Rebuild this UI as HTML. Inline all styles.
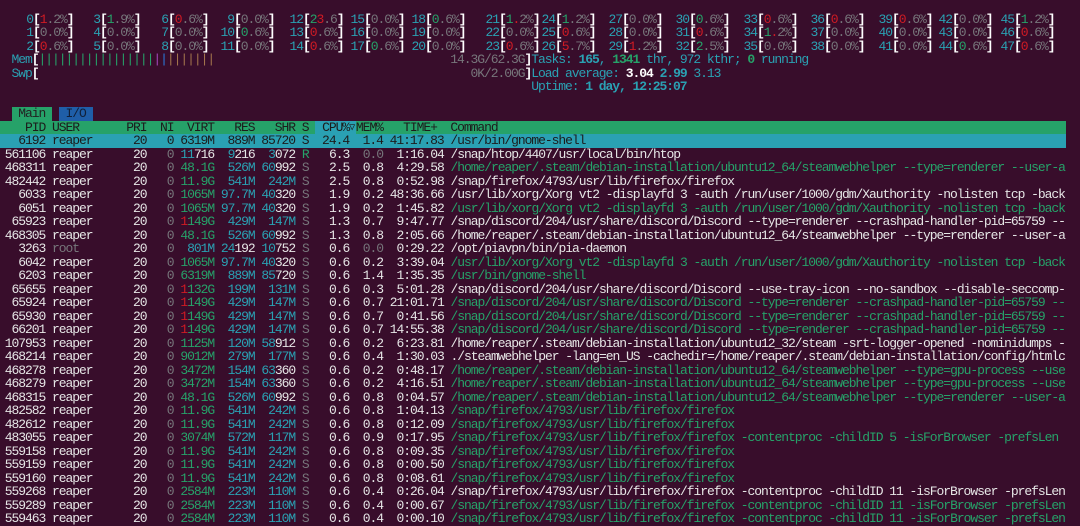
<!DOCTYPE html>
<html><head><meta charset="utf-8"><style>
html,body{margin:0;padding:0;background:#380d2b;width:1080px;height:526px;overflow:hidden}
body{font-family:"Liberation Mono","DejaVu Sans Mono",monospace;font-size:13px;letter-spacing:-1.05px;color:#e6e6e6;position:relative}
.blk{position:absolute;left:-2px;width:1068px}
.l{height:13.5px;line-height:13.5px;white-space:pre;position:relative;overflow:hidden;width:1068px}
c{color:#2aa1b3} g{color:#26a269} r{color:#d01b24} d{color:#77767b} w{color:#fff;font-weight:bold}
cb{color:#2aa1b3;font-weight:bold} gb{color:#26a269;font-weight:bold}
mg{color:#a347ba} bl{color:#2a7bde} og{color:#a2734c}
.m{position:absolute;color:#77767b;white-space:pre;line-height:13.5px}
.m i{position:absolute;right:100%;color:#2aa1b3;font-style:normal}
.m em{font-style:normal;color:#fff;font-weight:bold}
.rp{position:absolute;left:533.25px;top:0}
.rv{position:absolute;right:534.75px;top:0}
.tm{background:#26a269;color:#222}
.ti{background:#1f5ea8;color:#10203a}
.hd{background:#26a269;color:#1c1c1c}
.hc{background:#2aa1b3}
.sel{background:#2aa1b3;color:#1c1c1c}
.tri{display:inline-block;width:6.75px;overflow:hidden;vertical-align:top;letter-spacing:0;font-family:"DejaVu Sans Mono",monospace;font-size:10px}
</style></head><body>

<span class=m style="left:33px;top:12.75px"><i>0</i><em>[</em><r>1</r>.2%<em>]</em></span>
<span class=m style="left:100px;top:12.75px"><i>3</i><em>[</em><g>1</g>.9%<em>]</em></span>
<span class=m style="left:168px;top:12.75px"><i>6</i><em>[</em><r>0</r>.6%<em>]</em></span>
<span class=m style="left:234px;top:12.75px"><i>9</i><em>[</em>0.0%<em>]</em></span>
<span class=m style="left:303px;top:12.75px"><i>12</i><em>[</em><g>2</g><r>3</r>.6<em>]</em></span>
<span class=m style="left:364px;top:12.75px"><i>15</i><em>[</em>0.0%<em>]</em></span>
<span class=m style="left:425px;top:12.75px"><i>18</i><em>[</em><g>0</g>.6%<em>]</em></span>
<span class=m style="left:499px;top:12.75px"><i>21</i><em>[</em><g>1</g><r>.</r>2%<em>]</em></span>
<span class=m style="left:555px;top:12.75px"><i>24</i><em>[</em><g>1</g>.2%<em>]</em></span>
<span class=m style="left:622px;top:12.75px"><i>27</i><em>[</em>0.0%<em>]</em></span>
<span class=m style="left:689px;top:12.75px"><i>30</i><em>[</em><g>0</g>.6%<em>]</em></span>
<span class=m style="left:757px;top:12.75px"><i>33</i><em>[</em><r>0</r>.6%<em>]</em></span>
<span class=m style="left:824px;top:12.75px"><i>36</i><em>[</em><r>0</r>.6%<em>]</em></span>
<span class=m style="left:892px;top:12.75px"><i>39</i><em>[</em><r>0</r>.6%<em>]</em></span>
<span class=m style="left:952px;top:12.75px"><i>42</i><em>[</em>0.0%<em>]</em></span>
<span class=m style="left:1014px;top:12.75px"><i>45</i><em>[</em><g>1</g>.2%<em>]</em></span>

<span class=m style="left:33px;top:26.25px"><i>1</i><em>[</em>0.0%<em>]</em></span>
<span class=m style="left:100px;top:26.25px"><i>4</i><em>[</em>0.0%<em>]</em></span>
<span class=m style="left:168px;top:26.25px"><i>7</i><em>[</em>0.0%<em>]</em></span>
<span class=m style="left:234px;top:26.25px"><i>10</i><em>[</em><g>0</g>.6%<em>]</em></span>
<span class=m style="left:303px;top:26.25px"><i>13</i><em>[</em><r>0</r>.6%<em>]</em></span>
<span class=m style="left:364px;top:26.25px"><i>16</i><em>[</em>0.0%<em>]</em></span>
<span class=m style="left:425px;top:26.25px"><i>19</i><em>[</em>0.0%<em>]</em></span>
<span class=m style="left:499px;top:26.25px"><i>22</i><em>[</em>0.0%<em>]</em></span>
<span class=m style="left:555px;top:26.25px"><i>25</i><em>[</em><r>0</r>.6%<em>]</em></span>
<span class=m style="left:622px;top:26.25px"><i>28</i><em>[</em>0.0%<em>]</em></span>
<span class=m style="left:689px;top:26.25px"><i>31</i><em>[</em><r>0</r>.6%<em>]</em></span>
<span class=m style="left:757px;top:26.25px"><i>34</i><em>[</em><g>1</g><r>.</r>2%<em>]</em></span>
<span class=m style="left:824px;top:26.25px"><i>37</i><em>[</em>0.0%<em>]</em></span>
<span class=m style="left:892px;top:26.25px"><i>40</i><em>[</em>0.0%<em>]</em></span>
<span class=m style="left:952px;top:26.25px"><i>43</i><em>[</em>0.0%<em>]</em></span>
<span class=m style="left:1014px;top:26.25px"><i>46</i><em>[</em><r>0</r>.6%<em>]</em></span>

<span class=m style="left:33px;top:39.75px"><i>2</i><em>[</em><r>0</r>.6%<em>]</em></span>
<span class=m style="left:100px;top:39.75px"><i>5</i><em>[</em>0.0%<em>]</em></span>
<span class=m style="left:168px;top:39.75px"><i>8</i><em>[</em>0.0%<em>]</em></span>
<span class=m style="left:234px;top:39.75px"><i>11</i><em>[</em>0.0%<em>]</em></span>
<span class=m style="left:303px;top:39.75px"><i>14</i><em>[</em><r>0</r>.6%<em>]</em></span>
<span class=m style="left:364px;top:39.75px"><i>17</i><em>[</em><g>0</g>.6%<em>]</em></span>
<span class=m style="left:425px;top:39.75px"><i>20</i><em>[</em>0.0%<em>]</em></span>
<span class=m style="left:499px;top:39.75px"><i>23</i><em>[</em><r>0</r>.6%<em>]</em></span>
<span class=m style="left:555px;top:39.75px"><i>26</i><em>[</em><r>5</r>.7%<em>]</em></span>
<span class=m style="left:622px;top:39.75px"><i>29</i><em>[</em><r>1</r>.2%<em>]</em></span>
<span class=m style="left:689px;top:39.75px"><i>32</i><em>[</em><g>2</g>.5%<em>]</em></span>
<span class=m style="left:757px;top:39.75px"><i>35</i><em>[</em>0.0%<em>]</em></span>
<span class=m style="left:824px;top:39.75px"><i>38</i><em>[</em>0.0%<em>]</em></span>
<span class=m style="left:892px;top:39.75px"><i>41</i><em>[</em>0.0%<em>]</em></span>
<span class=m style="left:952px;top:39.75px"><i>44</i><em>[</em><g>0</g>.6%<em>]</em></span>
<span class=m style="left:1014px;top:39.75px"><i>47</i><em>[</em><r>0</r>.6%<em>]</em></span>

<div class=blk style="top:53.25px">
<div class=l>  <c>Mem</c><w>[</w><g>|||||||||||||||||</g><mg>|</mg><bl>|</bl><og>|||||||</og><span class=rv><d>14.3G/62.3G</d><w>]</w></span><span class=rp><c>Tasks: </c><cb>165</cb><c>, </c><gb>1341</gb><c> thr, 972 kthr; </c><gb>0</gb><c> running</c></span></div>
<div class=l>  <c>Swp</c><w>[</w><span class=rv><d>0K/2.00G</d><w>]</w></span><span class=rp><c>Load average: </c><w>3.04</w> <cb>2.99</cb> <c>3.13</c></span></div>
<div class=l><span class=rp><c>Uptime: </c><cb>1 day, 12:25:07</cb></span></div>
<div class=l></div>
<div class=l>  <span class=tm> Main </span> <span class=ti> I/O </span></div>
<div class="l hd">    PID USER       PRI  NI  VIRT   RES   SHR S <span class=hc> CPU%<span class=tri>▽</span></span>MEM%   TIME+  Command</div>
<div class="l sel">   6192 reaper      20   0 6319M  889M 85720 S  24.4  1.4 41:17.83 /usr/bin/gnome-shell</div>
<div class=l> 561106 reaper      20   <d>0</d> <c>11</c>716  <c>9</c>216  <c>3</c>072 <g>R</g>   6.3  <d>0.0</d>  1:16.04 /snap/htop/4407/usr/local/bin/htop</div>
<div class=l> 468311 reaper      20   <d>0</d> <g>48.1G</g>  <c>526M</c> <c>60</c>992 <d>S</d>   2.5  0.8  4:29.58 <g>/home/reaper/.steam/debian-installation/ubuntu12_64/steamwebhelper --type=renderer --user-a</g></div>
<div class=l> 482442 reaper      20   <d>0</d> <g>11.9G</g>  <c>541M</c>  <c>242M</c> <d>S</d>   2.5  0.8  0:52.98 /snap/firefox/4793/usr/lib/firefox/firefox</div>
<div class=l>   6033 reaper      20   <d>0</d> <g>1065M</g> <c>97.7M</c> <c>40</c>320 <d>S</d>   1.9  0.2 48:36.66 /usr/lib/xorg/Xorg vt2 -displayfd 3 -auth /run/user/1000/gdm/Xauthority -nolisten tcp -back</div>
<div class=l>   6051 reaper      20   <d>0</d> <g>1065M</g> <c>97.7M</c> <c>40</c>320 <d>S</d>   1.9  0.2  1:45.82 <g>/usr/lib/xorg/Xorg vt2 -displayfd 3 -auth /run/user/1000/gdm/Xauthority -nolisten tcp -back</g></div>
<div class=l>  65923 reaper      20   <d>0</d> <r>1</r><g>149G</g>  <c>429M</c>  <c>147M</c> <d>S</d>   1.3  0.7  9:47.77 /snap/discord/204/usr/share/discord/Discord --type=renderer --crashpad-handler-pid=65759 --</div>
<div class=l> 468305 reaper      20   <d>0</d> <g>48.1G</g>  <c>526M</c> <c>60</c>992 <d>S</d>   1.3  0.8  2:05.66 /home/reaper/.steam/debian-installation/ubuntu12_64/steamwebhelper --type=renderer --user-a</div>
<div class=l>   3263 <d>root</d>        20   <d>0</d>  <c>801M</c> <c>24</c>192 <c>10</c>752 <d>S</d>   0.6  <d>0.0</d>  0:29.22 /opt/piavpn/bin/pia-daemon</div>
<div class=l>   6042 reaper      20   <d>0</d> <g>1065M</g> <c>97.7M</c> <c>40</c>320 <d>S</d>   0.6  0.2  3:39.04 <g>/usr/lib/xorg/Xorg vt2 -displayfd 3 -auth /run/user/1000/gdm/Xauthority -nolisten tcp -back</g></div>
<div class=l>   6203 reaper      20   <d>0</d> <g>6319M</g>  <c>889M</c> <c>85</c>720 <d>S</d>   0.6  1.4  1:35.35 <g>/usr/bin/gnome-shell</g></div>
<div class=l>  65655 reaper      20   <d>0</d> <r>1</r><g>132G</g>  <c>199M</c>  <c>131M</c> <d>S</d>   0.6  0.3  5:01.28 /snap/discord/204/usr/share/discord/Discord --use-tray-icon --no-sandbox --disable-seccomp-</div>
<div class=l>  65924 reaper      20   <d>0</d> <r>1</r><g>149G</g>  <c>429M</c>  <c>147M</c> <d>S</d>   0.6  0.7 21:01.71 <g>/snap/discord/204/usr/share/discord/Discord --type=renderer --crashpad-handler-pid=65759 --</g></div>
<div class=l>  65930 reaper      20   <d>0</d> <r>1</r><g>149G</g>  <c>429M</c>  <c>147M</c> <d>S</d>   0.6  0.7  0:41.56 <g>/snap/discord/204/usr/share/discord/Discord --type=renderer --crashpad-handler-pid=65759 --</g></div>
<div class=l>  66201 reaper      20   <d>0</d> <r>1</r><g>149G</g>  <c>429M</c>  <c>147M</c> <d>S</d>   0.6  0.7 14:55.38 <g>/snap/discord/204/usr/share/discord/Discord --type=renderer --crashpad-handler-pid=65759 --</g></div>
<div class=l> 107953 reaper      20   <d>0</d> <g>1125M</g>  <c>120M</c> <c>58</c>912 <d>S</d>   0.6  0.2  6:23.81 /home/reaper/.steam/debian-installation/ubuntu12_32/steam -srt-logger-opened -nominidumps -</div>
<div class=l> 468214 reaper      20   <d>0</d> <g>9012M</g>  <c>279M</c>  <c>177M</c> <d>S</d>   0.6  0.4  1:30.03 ./steamwebhelper -lang=en_US -cachedir=/home/reaper/.steam/debian-installation/config/htmlc</div>
<div class=l> 468278 reaper      20   <d>0</d> <g>3472M</g>  <c>154M</c> <c>63</c>360 <d>S</d>   0.6  0.2  0:48.17 <g>/home/reaper/.steam/debian-installation/ubuntu12_64/steamwebhelper --type=gpu-process --use</g></div>
<div class=l> 468279 reaper      20   <d>0</d> <g>3472M</g>  <c>154M</c> <c>63</c>360 <d>S</d>   0.6  0.2  4:16.51 <g>/home/reaper/.steam/debian-installation/ubuntu12_64/steamwebhelper --type=gpu-process --use</g></div>
<div class=l> 468315 reaper      20   <d>0</d> <g>48.1G</g>  <c>526M</c> <c>60</c>992 <d>S</d>   0.6  0.8  0:04.57 <g>/home/reaper/.steam/debian-installation/ubuntu12_64/steamwebhelper --type=renderer --user-a</g></div>
<div class=l> 482582 reaper      20   <d>0</d> <g>11.9G</g>  <c>541M</c>  <c>242M</c> <d>S</d>   0.6  0.8  1:04.13 <g>/snap/firefox/4793/usr/lib/firefox/firefox</g></div>
<div class=l> 482612 reaper      20   <d>0</d> <g>11.9G</g>  <c>541M</c>  <c>242M</c> <d>S</d>   0.6  0.8  0:12.09 <g>/snap/firefox/4793/usr/lib/firefox/firefox</g></div>
<div class=l> 483055 reaper      20   <d>0</d> <g>3074M</g>  <c>572M</c>  <c>117M</c> <d>S</d>   0.6  0.9  0:17.95 <g>/snap/firefox/4793/usr/lib/firefox/firefox -contentproc -childID 5 -isForBrowser -prefsLen</g></div>
<div class=l> 559158 reaper      20   <d>0</d> <g>11.9G</g>  <c>541M</c>  <c>242M</c> <d>S</d>   0.6  0.8  0:09.35 <g>/snap/firefox/4793/usr/lib/firefox/firefox</g></div>
<div class=l> 559159 reaper      20   <d>0</d> <g>11.9G</g>  <c>541M</c>  <c>242M</c> <d>S</d>   0.6  0.8  0:00.50 <g>/snap/firefox/4793/usr/lib/firefox/firefox</g></div>
<div class=l> 559160 reaper      20   <d>0</d> <g>11.9G</g>  <c>541M</c>  <c>242M</c> <d>S</d>   0.6  0.8  0:08.61 <g>/snap/firefox/4793/usr/lib/firefox/firefox</g></div>
<div class=l> 559268 reaper      20   <d>0</d> <g>2584M</g>  <c>223M</c>  <c>110M</c> <d>S</d>   0.6  0.4  0:26.04 /snap/firefox/4793/usr/lib/firefox/firefox -contentproc -childID 11 -isForBrowser -prefsLen</div>
<div class=l> 559289 reaper      20   <d>0</d> <g>2584M</g>  <c>223M</c>  <c>110M</c> <d>S</d>   0.6  0.4  0:00.67 <g>/snap/firefox/4793/usr/lib/firefox/firefox -contentproc -childID 11 -isForBrowser -prefsLen</g></div>
<div class=l> 559463 reaper      20   <d>0</d> <g>2584M</g>  <c>223M</c>  <c>110M</c> <d>S</d>   0.6  0.4  0:00.10 <g>/snap/firefox/4793/usr/lib/firefox/firefox -contentproc -childID 11 -isForBrowser -prefsLen</g></div>
</div>
</body></html>
